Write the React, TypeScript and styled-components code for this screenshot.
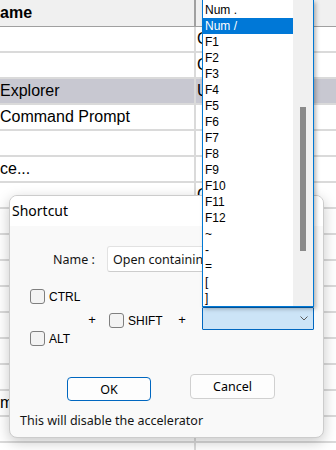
import styled, { createGlobalStyle } from 'styled-components'

const GlobalStyle = createGlobalStyle`
  *, *::before, *::after {
    box-sizing: border-box;
  }
  html, body {
    margin: 0;
    padding: 0;
    background: #ffffff;
  }
  body {
    font-family: 'Liberation Sans', Arial, sans-serif;
    color: #000000;
  }
`

type Row = { name: string; keys: string; selected?: boolean }

const rows: Row[] = [
  { name: '', keys: 'C' },
  { name: '', keys: 'C' },
  { name: 'Explorer', keys: 'U', selected: true },
  { name: 'Command Prompt', keys: '' },
  { name: '', keys: '' },
  { name: 'ce...', keys: '' },
  { name: '', keys: 'C' },
  { name: '', keys: '' },
  { name: '', keys: '' },
  { name: '', keys: '' },
  { name: '', keys: '' },
  { name: '', keys: '' },
  { name: '', keys: '' },
  { name: '', keys: '' },
  { name: 'mmc', keys: '' },
  { name: '', keys: '' },
  { name: '', keys: '' },
]

const keyOptions = [
  'Num .',
  'Num /',
  'F1',
  'F2',
  'F3',
  'F4',
  'F5',
  'F6',
  'F7',
  'F8',
  'F9',
  'F10',
  'F11',
  'F12',
  '~',
  '-',
  '=',
  '[',
  ']',
]

const App = () => {
  return (
    <Screen>
      <GlobalStyle />
      <ListView>
        <HeaderRow>
          <HeaderCell $divider>ame</HeaderCell>
          <HeaderCell $indent={112}>t</HeaderCell>
        </HeaderRow>
        {rows.map((row, i) => (
          <ListRow key={i} $selected={row.selected}>
            <Cell $divider>{row.name}</Cell>
            <Cell $indent={1}>{row.keys}</Cell>
          </ListRow>
        ))}
      </ListView>

      <Dialog>
        <TitleBar>Shortcut</TitleBar>
        <DialogBody>
          <NameRow>
            <NameLabel>Name :</NameLabel>
            <NameInput readOnly value="Open containing" />
          </NameRow>

          <KeysRow>
            <ModColumn>
              <CheckOption>
                <CheckBox />
                CTRL
              </CheckOption>
              <CheckOption>
                <CheckBox />
                ALT
              </CheckOption>
            </ModColumn>
            <PlusSign>+</PlusSign>
            <CheckOption $top={24} $left={7} $width={63}>
              <CheckBox />
              SHIFT
            </CheckOption>
            <PlusSign>+</PlusSign>
            <ComboBox>
              <svg width="8" height="5" viewBox="0 0 8 5">
                <polyline
                  points="0.5,0.5 4,4 7.5,0.5"
                  fill="none"
                  stroke="#5a5a5a"
                  strokeWidth="1"
                />
              </svg>
            </ComboBox>
          </KeysRow>

          <ButtonRow>
            <DialogButton $primary>OK</DialogButton>
            <DialogButton>Cancel</DialogButton>
          </ButtonRow>

          <Footer>This will disable the accelerator</Footer>
        </DialogBody>
      </Dialog>

      <DropList>
        <OptionList>
          {keyOptions.map((k) => (
            <Option key={k} $selected={k === 'Num /'}>
              {k}
            </Option>
          ))}
        </OptionList>
        <ScrollTrack>
          <ScrollThumb />
        </ScrollTrack>
      </DropList>
    </Screen>
  )
}

export default App

const Screen = styled.div`
  position: relative;
  width: 336px;
  height: 450px;
  overflow: hidden;
  background: #ffffff;
`

const ListView = styled.div`
  display: flex;
  flex-direction: column;
`

const HeaderRow = styled.div`
  display: grid;
  grid-template-columns: 196px 178px;
  height: 27px;
  background: #f0f0f0;
  border-bottom: 1px solid #a0a0a0;
`

const HeaderCell = styled.div<{ $divider?: boolean; $indent?: number }>`
  font-size: 16px;
  font-weight: bold;
  line-height: 26px;
  white-space: nowrap;
  overflow: hidden;
  padding-left: ${(p) => p.$indent ?? 0}px;
  border-right: ${(p) => (p.$divider ? '2px solid #a0a0a0' : 'none')};
`

const ListRow = styled.div<{ $selected?: boolean }>`
  display: grid;
  grid-template-columns: 196px 178px;
  height: 26px;
  flex-shrink: 0;
  border-bottom: 2px solid #dadada;
  background: ${(p) => (p.$selected ? '#c8c8d1' : '#ffffff')};
`

const Cell = styled.div<{ $divider?: boolean; $indent?: number }>`
  font-size: 16px;
  line-height: 24px;
  white-space: nowrap;
  overflow: hidden;
  padding-left: ${(p) => p.$indent ?? 0}px;
  border-right: ${(p) => (p.$divider ? '2px solid #dadada' : 'none')};
`

const Dialog = styled.div`
  position: absolute;
  left: 9px;
  top: 195px;
  width: 315px;
  height: 243px;
  display: flex;
  flex-direction: column;
  background: #f9f9f9;
  border: 1px solid #cccccc;
  border-radius: 8px;
  overflow: hidden;
  box-shadow: 0 4px 14px rgba(0, 0, 0, 0.22);
  font-family: 'Noto Sans', 'Open Sans', sans-serif;
  font-size: 12.5px;
  color: #141414;
`

const TitleBar = styled.div`
  height: 30px;
  line-height: 30px;
  padding-left: 2px;
  font-size: 14px;
  background: #ffffff;
  color: #000000;
`

const DialogBody = styled.div`
  display: flex;
  flex-direction: column;
  padding-top: 20px;
`

const NameRow = styled.div`
  display: flex;
  align-items: center;
  padding-left: 43px;
`

const NameLabel = styled.span`
  width: 54px;
`

const NameInput = styled.input`
  width: 193px;
  height: 26px;
  padding: 0 0 0 5px;
  border: 1px solid #e2e2e2;
  border-bottom-color: #cdcdcd;
  border-radius: 3px;
  background: #ffffff;
  font: inherit;
  color: #141414;
  outline: none;
`

const KeysRow = styled.div`
  display: flex;
  align-items: flex-start;
  margin-top: 17px;
  padding-left: 20px;
`

const ModColumn = styled.div`
  display: flex;
  flex-direction: column;
  gap: 27px;
  width: 52px;
`

const CheckOption = styled.label<{ $top?: number; $left?: number; $width?: number }>`
  display: flex;
  align-items: center;
  gap: 4px;
  height: 15px;
  margin-top: ${(p) => p.$top ?? 0}px;
  margin-left: ${(p) => p.$left ?? 0}px;
  width: ${(p) => (p.$width ? `${p.$width}px` : 'auto')};
  font-family: 'Liberation Sans', Arial, sans-serif;
  font-size: 12px;
  color: #000000;
`

const CheckBox = styled.span`
  width: 15px;
  height: 15px;
  flex-shrink: 0;
  border: 1px solid #7f7f7f;
  border-radius: 3px;
  background: #f3f3f3;
`

const PlusSign = styled.span`
  width: 20px;
  margin-top: 23px;
  line-height: 16px;
  text-align: center;
  font-family: 'Liberation Sans', Arial, sans-serif;
  font-size: 13px;
  color: #000000;
`

const ComboBox = styled.div`
  display: flex;
  align-items: center;
  justify-content: flex-end;
  width: 112px;
  height: 23px;
  margin-top: 18px;
  margin-left: 10px;
  padding-right: 5px;
  background: #cce4f7;
  border: 1px solid #0067c0;
  border-radius: 1px;
`

const ButtonRow = styled.div`
  display: flex;
  align-items: flex-start;
  gap: 39px;
  margin-top: 28px;
  padding-left: 57px;
`

const DialogButton = styled.button<{ $primary?: boolean }>`
  width: ${(p) => (p.$primary ? 84 : 85)}px;
  height: ${(p) => (p.$primary ? 24 : 25)}px;
  margin-top: ${(p) => (p.$primary ? 3 : 0)}px;
  padding: 0;
  background: #fdfdfd;
  border: 1px solid ${(p) => (p.$primary ? '#0067c0' : '#d0d0d0')};
  border-radius: 4px;
  font: inherit;
  color: #000000;
`

const Footer = styled.div`
  margin-top: 12px;
  padding-left: 10px;
  line-height: 16px;
`

const DropList = styled.div`
  position: absolute;
  left: 202px;
  top: 0;
  width: 112px;
  height: 307px;
  display: flex;
  background: #ffffff;
  border: 1px solid #0078d4;
  border-top: none;
  box-shadow: 2px 2px 4px rgba(0, 0, 0, 0.28);
  overflow: hidden;
`

const OptionList = styled.div`
  flex: 1;
  display: flex;
  flex-direction: column;
  padding-top: 2px;
  font-family: 'Liberation Sans', Arial, sans-serif;
  font-size: 12px;
`

const Option = styled.div<{ $selected?: boolean }>`
  height: 16px;
  line-height: 16px;
  flex-shrink: 0;
  padding-left: 2px;
  white-space: nowrap;
  background: ${(p) => (p.$selected ? '#0078d7' : 'transparent')};
  color: ${(p) => (p.$selected ? '#ffffff' : '#000000')};
`

const ScrollTrack = styled.div`
  width: 20px;
  flex-shrink: 0;
  padding: 107px 0 0 7px;
  background: #f0f0f0;
`

const ScrollThumb = styled.div`
  width: 6px;
  height: 144px;
  background: #8a8a8a;
`
